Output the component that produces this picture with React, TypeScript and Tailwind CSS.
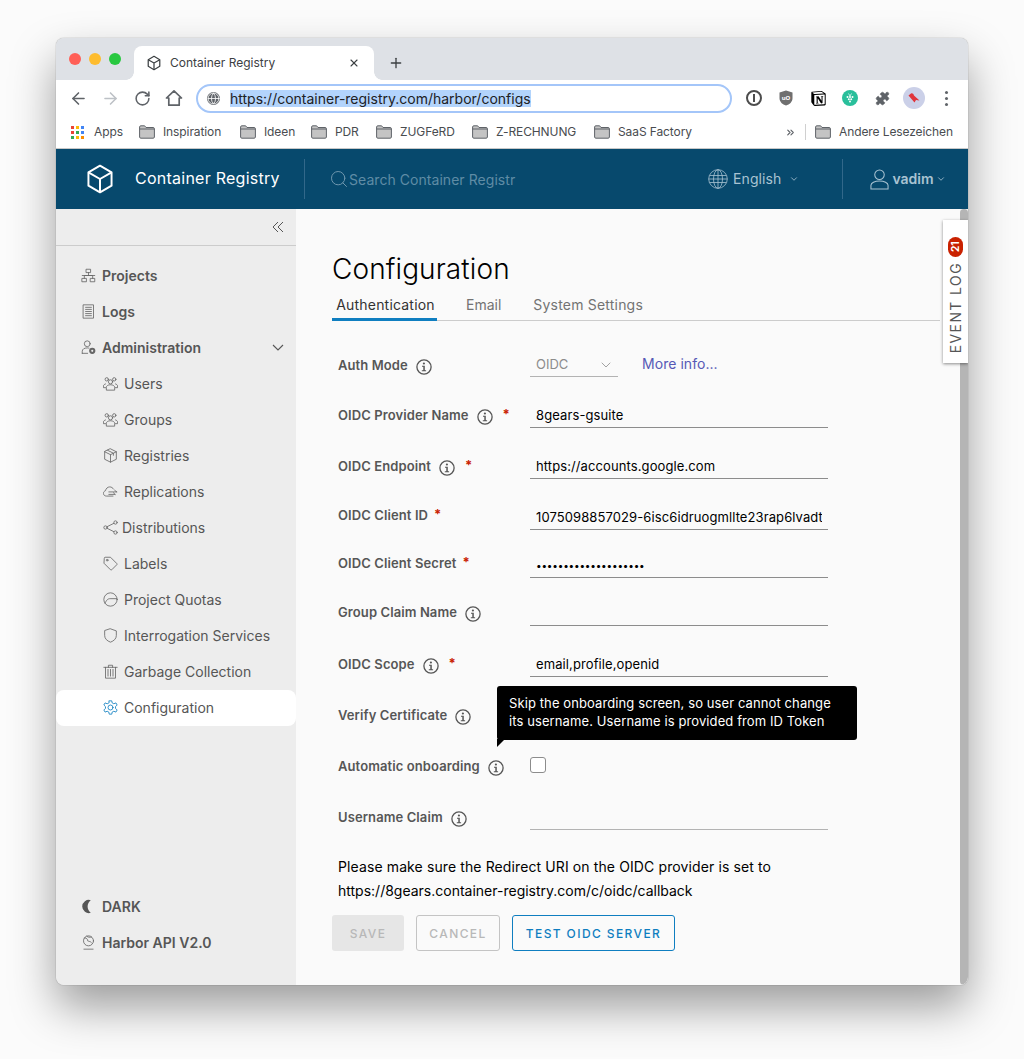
import React from 'react';
import { ArrowLeft, ArrowRight, RotateCw, Plus, X, ChevronDown, ChevronsRight, Puzzle, Search, Globe } from 'lucide-react';
import { SiNotion } from 'react-icons/si';

const chrome = "font-['Inter',sans-serif]";
const app = "font-['Inter',sans-serif]";

function Svg({ className, children }: { className?: string; children: React.ReactNode }): React.JSX.Element {
  return (
    <svg viewBox="0 0 36 36" fill="none" stroke="currentColor" strokeWidth="2" strokeLinecap="round" strokeLinejoin="round" className={className}>
      {children}
    </svg>
  );
}

const icons: Record<string, React.ReactNode> = {
  projects: (
    <>
      <rect x="13" y="3" width="10" height="8" />
      <rect x="3" y="25" width="10" height="8" />
      <rect x="23" y="25" width="10" height="8" />
      <path d="M18 11v7M8 25v-7h20v7M3 18h30" />
    </>
  ),
  logs: (
    <>
      <rect x="6" y="2" width="24" height="32" />
      <path d="M11 8h14M11 13h14M11 18h14M11 23h14M11 28h14" />
    </>
  ),
  admin: (
    <>
      <circle cx="15" cy="9" r="7" />
      <path d="M3 32v-5c0-5 5-8 12-8 1.500 0 3 .2 4 .5M3 32h13" />
      <circle cx="27" cy="26" r="5" strokeWidth="5" />
    </>
  ),
  users: (
    <>
      <circle cx="18" cy="14" r="5" />
      <path d="M8 33v-6c0-3 4-6 10-6s10 3 10 6v6zM6 19c-3 1-5 3-5 5v4h5M30 19c3 1 5 3 5 5v4h-5" />
      <circle cx="9" cy="8" r="4" />
      <circle cx="27" cy="8" r="4" />
    </>
  ),
  box: <path d="M18 2 32 9v18l-14 7-14-7V9zM4 9l14 7 14-7M18 16v18M11 5.500l14 7v5" />,
  cloud: (
    <>
      <path d="M24 29H8c-4 0-7-3-7-6.500 0-3 2-5.500 5-6.500 1-5 5-9 10-9 4 0 7.500 2 9 5" />
      <path d="M14 19h19M14 25h15M28 15l5 4M25 21l4 4" />
    </>
  ),
  share: (
    <>
      <circle cx="6" cy="18" r="4" />
      <circle cx="30" cy="6" r="4" />
      <circle cx="30" cy="30" r="4" />
      <path d="m10 16 16-8M10 20l16 8" />
    </>
  ),
  tag: (
    <>
      <path d="M3 5c0-1 1-2 2-2h13l15 15c1 1 1 2 0 3L21 33c-1 1-2 1-3 0L3 18z" />
      <circle cx="10" cy="10" r="2" />
    </>
  ),
  quota: (
    <>
      <circle cx="18" cy="18" r="16" />
      <path d="M5 27c3-8 7-11 12-11h16" />
    </>
  ),
  shield: <path d="M18 2 32 7v11c0 8-6 13-14 16C10 31 4 26 4 18V7z" />,
  trash: <path d="M2 8h32M13 8V3h10v5M6 8v26h24V8M12 13v16M18 13v16M24 13v16" />,
  gear: (
    <>
      <circle cx="18" cy="18" r="6" />
      <path d="M15 2h6l1 5 4 2 5-2 3 5-4 4v4l4 4-3 5-5-2-4 2-1 5h-6l-1-5-4-2-5 2-3-5 4-4v-4l-4-4 3-5 5 2 4-2z" />
    </>
  ),
  api: (
    <>
      <circle cx="18" cy="14" r="12" />
      <path d="M8 7c5 0 9 3 8 7 3 2 7 1 9 4M14 3c3 3 8 3 11 2M7 34h22" />
    </>
  ),
};

function NavIcon({ name, className }: { name: string; className?: string }): React.JSX.Element {
  return <Svg className={className ?? 'w-[15px] h-[15px] text-[#666] shrink-0'}>{icons[name]}</Svg>;
}

function Info(): React.JSX.Element {
  return (
    <svg viewBox="0 0 16 16" className="w-4 h-4 text-[#565656] shrink-0 mt-[2px]">
      <circle cx="8" cy="8" r="7.100" fill="none" stroke="currentColor" strokeWidth="1.300" />
      <circle cx="7.900" cy="4.500" r="1.100" fill="currentColor" />
      <path d="M6 6.800h2.800v4.500h1.300v1H5.800v-1h1.500V7.800H6z" fill="currentColor" />
    </svg>
  );
}

function Folder({ className }: { className?: string }): React.JSX.Element {
  return (
    <svg viewBox="0 0 16 14" className={className ?? 'w-4 h-[14px]'}>
      <path d="M.600 12V2c0-.7.500-1.200 1.200-1.200h3.800l1.400 1.700h7.200c.7 0 1.200.5 1.200 1.200V12c0 .7-.5 1.200-1.200 1.200H1.800C1.100 13.200.600 12.700.600 12z" fill="#c4c4c4" stroke="#5f6368" strokeWidth="1" />
      <path d="M.600 4h14.800" stroke="#5f6368" strokeWidth="1" />
    </svg>
  );
}

const bookmarks = [
  { label: 'Inspiration', w: 'w-[101px]' },
  { label: 'Ideen', w: 'w-[71px]' },
  { label: 'PDR', w: 'w-[65px]' },
  { label: 'ZUGFeRD', w: 'w-[96px]' },
  { label: 'Z-RECHNUNG', w: 'w-[122px]' },
  { label: 'SaaS Factory', w: 'w-[191px]' },
];

const appColors = ['#ea4335', '#fbbc05', '#4285f4', '#ea4335', '#34a853', '#4285f4', '#34a853', '#fbbc05', '#fb8c00'];

const subItems = [
  { icon: 'users', label: 'Users', gap: 'ml-[6px]' },
  { icon: 'users', label: 'Groups', gap: 'ml-[6px]' },
  { icon: 'box', label: 'Registries', gap: 'ml-[6px]' },
  { icon: 'cloud', label: 'Replications', gap: 'ml-[6px]' },
  { icon: 'share', label: 'Distributions', gap: 'ml-[4px]' },
  { icon: 'tag', label: 'Labels', gap: 'ml-[6px]' },
  { icon: 'quota', label: 'Project Quotas', gap: 'ml-[6px]' },
  { icon: 'shield', label: 'Interrogation Services', gap: 'ml-[6px]' },
  { icon: 'trash', label: 'Garbage Collection', gap: 'ml-[6px]' },
];

const fields = [
  { label: 'OIDC Provider Name', h: 'h-[51px]', value: '8gears-gsuite', info: true, required: true, lift: 'mt-[3px]' },
  { label: 'OIDC Endpoint', h: 'h-[51px]', value: 'https://accounts.google.com', info: true, required: true, lift: 'mt-[2px]' },
  { label: 'OIDC Client ID', h: 'h-[51px]', value: '1075098857029-6isc6idruogmllte23rap6lvadtq', info: false, required: true, lift: 'mb-[2px]' },
  { label: 'OIDC Client Secret', h: 'h-[45px]', value: '••••••••••••••••••••', info: false, required: true, lift: 'mb-[1px]' },
  { label: 'Group Claim Name', h: 'h-[51px]', value: '', info: true, required: false, lift: 'mt-[1px]' },
  { label: 'OIDC Scope', h: 'h-[51px]', value: 'email,profile,openid', info: true, required: true, lift: 'mt-[2px]' },
];

function Toolbar(): React.JSX.Element {
  const slot = 'w-8 h-full flex items-center justify-center shrink-0';
  return (
    <div className="h-[36px] bg-white flex items-center pl-[6px]">
      <div className={slot}>
        <ArrowLeft className="w-[19px] h-[19px] text-[#5f6368]" strokeWidth={2} />
      </div>
      <div className={slot}>
        <ArrowRight className="w-[19px] h-[19px] text-[#bdc1c6]" strokeWidth={2} />
      </div>
      <div className={slot}>
        <RotateCw className="w-[17px] h-[17px] text-[#5f6368]" strokeWidth={2.200} />
      </div>
      <div className={slot}>
        <svg viewBox="0 0 18 18" fill="none" stroke="#5f6368" strokeWidth="1.700" strokeLinejoin="round" className="w-[18px] h-[18px]">
          <path d="M1.500 9 9 1.800 16.500 9h-2.300v7.200H3.800V9z" />
        </svg>
      </div>
      <div className="w-[536px] h-[29px] ml-[6px] rounded-full border-2 border-[#a4c6f9] flex items-center pl-[9px] shrink-0">
        <Globe className="w-[13px] h-[13px] text-white bg-[#5f6368] rounded-full" strokeWidth={1.500} />
        <span className={`${chrome} ml-[10px] text-[14px] leading-[17px] bg-[#b3d4fc] text-[#202124]`}>https://container-registry.com/harbor/configs</span>
      </div>
      <div className="ml-[6px] flex items-center h-full">
        <div className={slot}>
          <div className="w-[16px] h-[16px] rounded-full border-2 border-[#4d4d4d] flex items-center justify-center">
            <div className="w-[2px] h-[8px] bg-[#4d4d4d]" />
          </div>
        </div>
        <div className={slot}>
          <svg viewBox="0 0 14 16" className="w-[14px] h-[16px]">
            <path d="M7 .5 13.500 2.500V8c0 4-3 6.500-6.500 7.500C3.500 14.500.5 12 .5 8V2.500z" fill="#6f6f6f" />
            <text x="7" y="9.500" textAnchor="middle" fontSize="6" fontWeight="700" fill="white">uO</text>
          </svg>
        </div>
        <div className={slot}>
          <SiNotion className="w-[15px] h-[15px] text-black" />
        </div>
        <div className={slot}>
          <div className="w-[16px] h-[16px] rounded-full bg-[#29bf9b] flex items-center justify-center">
            <svg viewBox="0 0 10 10" className="w-[10px] h-[10px]" fill="white">
              <circle cx="2.500" cy="4" r="1" />
              <circle cx="5" cy="4" r="1" />
              <circle cx="7.500" cy="4" r="1" />
              <circle cx="3.800" cy="6.200" r="1" />
              <circle cx="6.200" cy="6.200" r="1" />
              <circle cx="5" cy="8.400" r="1" />
              <path d="M5 3 3.500.5M5 3 6.500.5" stroke="white" strokeWidth=".7" />
            </svg>
          </div>
        </div>
        <div className={slot}>
          <Puzzle className="w-[15px] h-[15px] text-[#5f6368] fill-[#5f6368]" strokeWidth={1} />
        </div>
        <div className={slot}>
          <div className="w-[22px] h-[22px] rounded-full bg-[#cbd0e8] flex items-center justify-center">
            <svg viewBox="0 0 14 14" className="w-[14px] h-[14px]">
              <path d="M1.500 4.500 4 2.500c1.500-.5 2.500.5 3 2l5.500 5-3.500-.5-1.500 2.500L4.500 8z" fill="#e0343c" />
            </svg>
          </div>
        </div>
        <div className={slot}>
          <div className="flex flex-col gap-[3px]">
            <div className="w-[3px] h-[3px] rounded-full bg-[#5f6368]" />
            <div className="w-[3px] h-[3px] rounded-full bg-[#5f6368]" />
            <div className="w-[3px] h-[3px] rounded-full bg-[#5f6368]" />
          </div>
        </div>
      </div>
    </div>
  );
}

function Bookmarks(): React.JSX.Element {
  return (
    <div className={`${chrome} h-[33px] bg-white border-b border-[#c8c8c8] flex items-center pl-[15px] text-[12px] tracking-[-0.1px] text-[#494c50]`}>
      <div className="grid grid-cols-3 gap-[2px] w-[13px] h-[13px]">
        {appColors.map((color, i) => (
          <div key={i} className="w-[3px] h-[3px]" style={{ backgroundColor: color }} />
        ))}
      </div>
      <span className="ml-[10px] w-[45px]">Apps</span>
      {bookmarks.map((b) => (
        <div key={b.label} className={`flex items-center gap-[8px] ${b.w}`}>
          <Folder className="w-4 h-[14px] shrink-0" />
          <span>{b.label}</span>
        </div>
      ))}
      <ChevronsRight className="w-[11px] h-[11px] text-[#5f6368]" strokeWidth={2.500} />
      <div className="w-px h-4 bg-[#d0d0d0] ml-[9px]" />
      <Folder className="w-4 h-[14px] ml-[9px]" />
      <span className="ml-[8px]">Andere Lesezeichen</span>
    </div>
  );
}

function Header(): React.JSX.Element {
  return (
    <header className={`${app} h-[60px] bg-[#07496d] flex items-center text-[#a9c3d2]`}>
      <svg viewBox="0 0 36 36" fill="none" stroke="white" strokeWidth="2.200" strokeLinejoin="round" className="w-[32px] h-[32px] ml-[28px]">
        <path d="M18 3 31 10.500v15L18 33 5 25.500v-15z" />
        <path d="M5 10.500 18 18l13-7.500M18 18v15" />
      </svg>
      <span className="text-white text-[16px] ml-[19px] w-[169px] tracking-[0.25px] mb-[2px]">Container Registry</span>
      <div className="w-px h-[40px] bg-[#32688a]" />
      <Search className="w-[20px] h-[20px] ml-[24px] text-[#6f97ae]" strokeWidth={1.200} />
      <span className="text-[14px] text-[#5f8ca5] w-[359px] tracking-[0.05px]">Search Container Registr</span>
      <svg viewBox="0 0 20 20" fill="none" stroke="currentColor" strokeWidth=".8" className="w-5 h-5">
        <circle cx="10" cy="10" r="9.300" />
        <ellipse cx="10" cy="10" rx="4.500" ry="9.300" />
        <path d="M10 .7v18.600M1.500 6.500h17M.7 10h18.600M1.500 13.500h17" />
      </svg>
      <span className="text-[14px] ml-[5px] mb-[1px] tracking-[0.1px]">English</span>
      <ChevronDown className="w-[10px] h-[10px] ml-[8px]" strokeWidth={2} />
      <div className="w-px h-[40px] bg-[#32688a] ml-[43px]" />
      <svg viewBox="0 0 20 22" fill="none" stroke="currentColor" strokeWidth="1.100" className="w-[19px] h-[21px] ml-[27px]">
        <circle cx="10" cy="6" r="5" />
        <path d="M1 21v-4c0-2.500 4-4.500 9-4.500s9 2 9 4.500v4z" />
      </svg>
      <span className="text-[14px] font-semibold ml-[3px] mb-[1px]">vadim</span>
      <ChevronDown className="w-[10px] h-[10px] ml-[2px]" strokeWidth={2} />
    </header>
  );
}

function Sidebar(): React.JSX.Element {
  const top = 'flex items-center h-9 pb-[2px] pl-[25px] text-[14px] font-semibold text-[#565656]';
  const sub = 'flex items-center h-9 pb-[2px] pl-[47px] text-[14px] text-[#565656]';
  return (
    <aside className={`${app} w-[240px] shrink-0 bg-[#ededed] flex flex-col`}>
      <div className="h-[37px] shrink-0 border-b border-[#cccccc] flex items-center justify-end pr-[12px]">
        <svg viewBox="0 0 12 12" fill="none" stroke="#565656" strokeWidth="1" className="w-3 h-3">
          <path d="M6 1 1 6l5 5M11 1 6 6l5 5" />
        </svg>
      </div>
      <nav className="pt-[12px] flex-1 flex flex-col">
        <div className={top}>
          <NavIcon name="projects" />
          <span className="ml-[6px]">Projects</span>
        </div>
        <div className={top}>
          <NavIcon name="logs" />
          <span className="ml-[6px]">Logs</span>
        </div>
        <div className={`${top} pr-[12px]`}>
          <NavIcon name="admin" />
          <span className="ml-[6px] flex-1">Administration</span>
          <svg viewBox="0 0 12 7" fill="none" stroke="#565656" strokeWidth="1.100" className="w-3 h-[7px]">
            <path d="M1 1l5 5 5-5" />
          </svg>
        </div>
        {subItems.map((item) => (
          <div key={item.label} className={sub}>
            <NavIcon name={item.icon} />
            <span className={item.gap}>{item.label}</span>
          </div>
        ))}
        <div className={`${sub} bg-white rounded-[8px]`}>
          <NavIcon name="gear" className="w-[15px] h-[15px] text-[#0f7ec0]" />
          <span className="ml-[6px]">Configuration</span>
        </div>
        <div className="mt-auto pb-[24px]">
          <div className={top}>
            <svg viewBox="0 0 15 15" className="w-[15px] h-[15px]" fill="#565656">
              <path d="M9.800 1.200A6.600 6.600 0 1 0 9.800 13.800 7.800 7.800 0 0 1 9.800 1.200z" />
            </svg>
            <span className="ml-[6px]">DARK</span>
          </div>
          <div className={top}>
            <NavIcon name="api" />
            <span className="ml-[6px]">Harbor API V2.0</span>
          </div>
        </div>
      </nav>
    </aside>
  );
}

function FieldLabel({ label, required, info = true, lift = '' }: { label: string; required?: boolean; info?: boolean; lift?: string }): React.JSX.Element {
  return (
    <div className={`flex items-center w-[192px] shrink-0 text-[13px] font-semibold tracking-[0.1px] text-[#565656] ${lift}`}>
      <span>{label}</span>
      {info && (
        <span className="ml-2">
          <Info />
        </span>
      )}
      {required && <span className={`${info ? 'ml-[10px]' : 'ml-[6px]'} text-[#c92100] text-[13px] font-bold -mt-[2px]`}>*</span>}
    </div>
  );
}

function Content(): React.JSX.Element {
  return (
    <main className={`${app} relative flex-1 bg-[#fafafa] pl-[36px] pt-[43px] text-black`}>
      <h1 className="text-[28px] leading-[34px] font-light tracking-[0.1px]">Configuration</h1>
      <div className="mt-[8px] w-[608px] h-[27px] border-b border-[#cccccc] flex text-[14px] text-[#737373] tracking-[0.2px]">
        <div className="w-[105px] h-[27px] border-b-[3px] border-[#0f7ec0] text-center text-[#333] leading-[22px] pl-[2px]">Authentication</div>
        <div className="ml-[29px] leading-[22px] tracking-normal">Email</div>
        <div className="ml-[32px] leading-[22px]">System Settings</div>
      </div>

      <div className="pl-[6px] pt-[18px]">
        <div className="h-[50px] flex items-start pt-[17px]">
          <FieldLabel label="Auth Mode" />
          <div className="w-[88px] h-[24px] -mt-[3px] border-b border-[#b3b3b3] flex items-center justify-between text-[13px] text-[#8c8c8c] pl-[6px] pr-[4px]">
            <span>OIDC</span>
            <ChevronDown className="w-4 h-4" strokeWidth={1.200} />
          </div>
          <span className="ml-[24px] -mt-[2px] text-[14px] text-[#5659b6] tracking-[0.05px] leading-[20px]">More info...</span>
        </div>
        {fields.map((f) => (
          <div key={f.label} className={`flex items-center ${f.h}`}>
            <FieldLabel label={f.label} required={f.required} info={f.info} lift={f.lift} />
            <div className="w-[298px] h-[26px] border-b border-[#8c8c8c] px-[6px]">
              <div className={`leading-[26px] overflow-hidden whitespace-nowrap ${f.value.startsWith('•') ? 'text-[10px] tracking-[-0.2px]' : 'text-[13px] tracking-[0.1px]'}`}>{f.value}</div>
            </div>
          </div>
        ))}
        <div className="h-[51px] flex items-center">
          <FieldLabel label="Verify Certificate" lift="mt-[2px]" />
        </div>
        <div className="h-[51px] flex items-center">
          <FieldLabel label="Automatic onboarding" lift="mt-[2px]" />
          <div className="w-4 h-4 -mt-[1px] rounded-[3px] border border-[#8c8c8c] bg-white" />
        </div>
        <div className="h-[51px] flex items-center">
          <FieldLabel label="Username Claim" lift="mt-[2px]" />
          <div className="w-[298px] h-[26px] border-b border-[#b3b3b3]" />
        </div>
        <p className="mt-[13px] text-[14px] leading-[24px]">
          <span className="tracking-[0.11px]">Please make sure the Redirect URI on the OIDC provider is set to</span>
          <br />
          https://8gears.container-registry.com/c/oidc/callback
        </p>
      </div>

      <div className="mt-[12px] flex gap-[12px] text-[12px] font-medium tracking-[1.400px]">
        <button type="button" className="w-[72px] h-9 pt-[2px] rounded-[3px] bg-[#e6e6e6] text-[#b8b8b8]">SAVE</button>
        <button type="button" className="w-[84px] h-9 pt-[2px] rounded-[3px] border border-[#c4c4c4] text-[#b8b8b8]">CANCEL</button>
        <button type="button" className="w-[163px] h-9 pt-[2px] rounded-[3px] border border-[#0f7ec0] text-[#0f7ec0]">TEST OIDC SERVER</button>
      </div>

      <div className="absolute left-[201px] top-[477px] w-[360px] h-[54px] bg-black rounded-[3px] text-white text-[13px] tracking-[0.1px] leading-[18px] px-3 py-[8px]">
        Skip the onboarding screen, so user cannot change
        <br />
        its username. Username is provided from ID Token
        <svg viewBox="0 0 8 8" className="absolute left-0 top-[53px] w-2 h-2" fill="black">
          <path d="M0 0h8L0 8z" />
        </svg>
      </div>

      <div className="absolute right-0 top-0 bottom-0 w-2 bg-[#f1f1f1]">
        <div className="h-full rounded-full bg-[#b5b5b5]" />
      </div>

      <div className="absolute right-0 top-[11px] w-[25px] h-[143px] bg-white shadow-[0_1px_3px_rgba(0,0,0,0.45)] flex flex-col-reverse items-center pb-[10px] gap-[5px]">
        <span className="[writing-mode:vertical-rl] rotate-180 text-[14px] text-[#565656] tracking-[1.400px] whitespace-nowrap">EVENT LOG</span>
        <span className="w-[15px] h-[20px] rounded-full bg-[#c92100] text-white text-[10px] font-bold flex items-center justify-center [writing-mode:vertical-rl] rotate-180">21</span>
      </div>
    </main>
  );
}

export default function App(): React.JSX.Element {
  return (
    <div className="w-[1024px] h-[1059px] bg-[#fbfbfb] pt-[38px] pl-[56px] overflow-hidden">
      <div className="relative w-[912px] h-[947px] rounded-[8px] overflow-hidden flex flex-col shadow-[0_0_1px_rgba(0,0,0,0.6),0_22px_45px_rgba(0,0,0,0.38)]">
        <div className={`${chrome} h-[42px] shrink-0 bg-[#dee1e6] flex items-end pl-[78px]`}>
          <div className="relative w-[240px] h-[34px] bg-white rounded-t-[8px] flex items-center pl-[12px] pr-[14px] text-[12px] text-[#3c4043]">
            <span className="absolute -left-2 bottom-0 w-2 h-2 bg-[radial-gradient(circle_at_0_0,#dee1e6_7.500px,#ffffff_8px)]" />
            <span className="absolute -right-2 bottom-0 w-2 h-2 bg-[radial-gradient(circle_at_100%_0,#dee1e6_7.500px,#ffffff_8px)]" />
            <svg viewBox="0 0 36 36" fill="none" stroke="#3c4043" strokeWidth="2.800" strokeLinejoin="round" className="w-4 h-4">
              <path d="M18 3 31 10.500v15L18 33 5 25.500v-15z" />
              <path d="M5 10.500 18 18l13-7.500M18 18v15" />
            </svg>
            <span className="ml-2 flex-1">Container Registry</span>
            <X className="w-3 h-3 text-[#3c4043]" strokeWidth={2.200} />
          </div>
          <Plus className="w-4 h-4 ml-[14px] mb-[9px] text-[#3c4043]" strokeWidth={2} />
        </div>
        <div className="absolute left-[13px] top-[15px] flex gap-2">
          <div className="w-3 h-3 rounded-full bg-[#ff5f57]" />
          <div className="w-3 h-3 rounded-full bg-[#febc2e]" />
          <div className="w-3 h-3 rounded-full bg-[#28c840]" />
        </div>
        <Toolbar />
        <Bookmarks />
        <Header />
        <div className="flex-1 flex min-h-0">
          <Sidebar />
          <Content />
        </div>
      </div>
    </div>
  );
}
